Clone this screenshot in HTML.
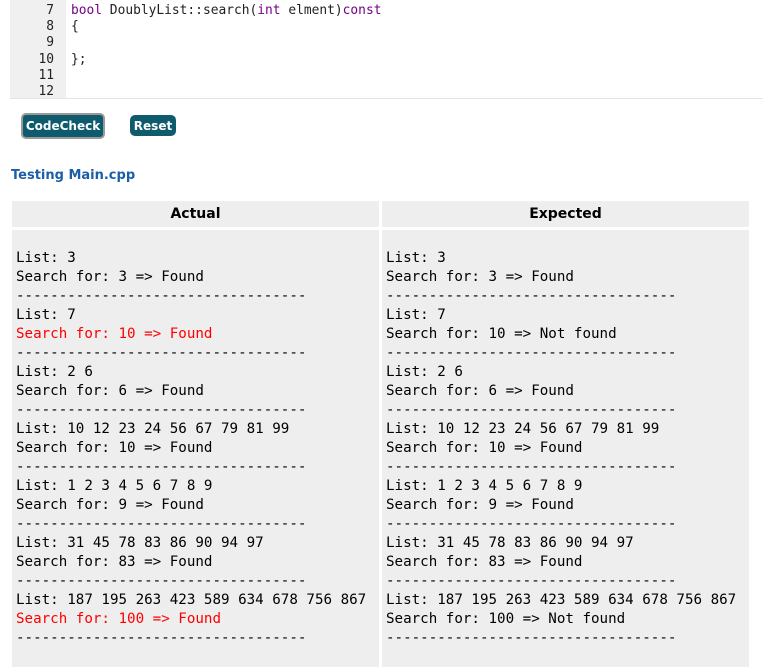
<!DOCTYPE html>
<html><head><meta charset="utf-8"><style>
body{margin:0;width:763px;height:667px;overflow:hidden;background:#fff;font-family:"DejaVu Sans","Liberation Sans",sans-serif;position:relative}
.code{position:absolute;left:10px;top:0;width:753px;height:98px;border-bottom:1px solid #e4e4e4;background:#fff}
.gut{position:absolute;left:0;top:0;width:56px;height:98px;background:#f0f0f0}
.ln{position:absolute;left:0;width:44px;text-align:right;font:12.9px/16.2px "DejaVu Sans Mono",monospace;color:#222}
.cl{position:absolute;left:61px;font:12.9px/16.2px "DejaVu Sans Mono",monospace;color:#222;white-space:pre}
.kw{color:#770088}
.btn{position:absolute;background:#0e5b6e;color:#fff;font-weight:bold;font-size:12px;border-radius:5px;text-align:center}
h{position:absolute;left:11px;top:168px;font-weight:bold;font-size:13px;color:#1d5ea8}
.cell{position:absolute;background:#eeeeee}
.th{font-weight:bold;font-size:14px;text-align:center;line-height:27px;color:#000}
pre{position:absolute;margin:0;font:14.2px/19px "DejaVu Sans Mono",monospace;color:#000}
.r{color:#ff0000}
</style></head><body>
<div class="code"><div class="gut"></div>
<div class="ln" style="top:3px">7<br>8<br>9<br>10<br>11<br>12</div>
<div class="cl" style="top:3px"><span class="kw">bool</span> DoublyList::search(<span class="kw">int</span> elment)<span class="kw">const</span>
{

};</div></div>
<div class="btn" style="left:21px;top:113px;width:80px;height:22px;line-height:22px;border:2px solid #999">CodeCheck</div>
<div class="btn" style="left:130px;top:115px;width:46px;height:21px;line-height:22px">Reset</div>
<h>Testing Main.cpp</h>
<div class="cell th" style="left:12px;top:201px;width:367px;height:26px">Actual</div>
<div class="cell th" style="left:382px;top:201px;width:367px;height:26px">Expected</div>
<div class="cell" style="left:12px;top:230px;width:367px;height:437px"></div>
<div class="cell" style="left:382px;top:230px;width:367px;height:437px"></div>
<pre style="left:16px;top:249px">List: 3
Search for: 3 =&gt; Found
----------------------------------
List: 7
<span class="r">Search for: 10 =&gt; Found</span>
----------------------------------
List: 2 6
Search for: 6 =&gt; Found
----------------------------------
List: 10 12 23 24 56 67 79 81 99
Search for: 10 =&gt; Found
----------------------------------
List: 1 2 3 4 5 6 7 8 9
Search for: 9 =&gt; Found
----------------------------------
List: 31 45 78 83 86 90 94 97
Search for: 83 =&gt; Found
----------------------------------
List: 187 195 263 423 589 634 678 756 867
<span class="r">Search for: 100 =&gt; Found</span>
----------------------------------</pre>
<pre style="left:386px;top:249px">List: 3
Search for: 3 =&gt; Found
----------------------------------
List: 7
Search for: 10 =&gt; Not found
----------------------------------
List: 2 6
Search for: 6 =&gt; Found
----------------------------------
List: 10 12 23 24 56 67 79 81 99
Search for: 10 =&gt; Found
----------------------------------
List: 1 2 3 4 5 6 7 8 9
Search for: 9 =&gt; Found
----------------------------------
List: 31 45 78 83 86 90 94 97
Search for: 83 =&gt; Found
----------------------------------
List: 187 195 263 423 589 634 678 756 867
Search for: 100 =&gt; Not found
----------------------------------</pre>
</body></html>
